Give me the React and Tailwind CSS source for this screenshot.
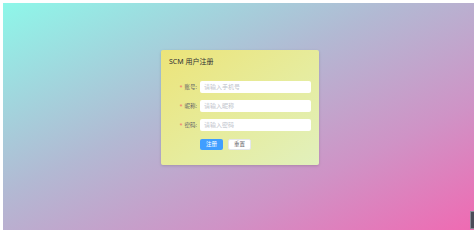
export default function App() {
  const rows = [
    { label: "账号:", placeholder: "请输入手机号", type: "text" },
    { label: "昵称:", placeholder: "请输入昵称", type: "text" },
    { label: "密码:", placeholder: "请输入密码", type: "password" },
  ];

  return (
    <div
      className="relative h-[232px] w-[474px] overflow-hidden bg-white pb-[2px] pl-[3px] pt-[3px]"
      style={{ fontFamily: '"Noto Sans", "Noto Sans CJK SC", sans-serif' }}
    >
      <div className="h-full w-full bg-[linear-gradient(to_bottom_right,#8ef7e9_0%,#b2b9d3_42%,#cf93c6_72%,#f06ab2_100%)] pl-[158px] pt-[47px]">
        <div className="w-[158px] rounded-[2px] bg-[linear-gradient(to_bottom_right,#ece479_0%,#e6ec9e_55%,#e1f0bd_100%)] pb-[15px] pl-[8px] pr-[8px] pt-[7px] shadow-[0_1px_3px_rgba(0,0,0,0.15)]">
          <h1 className="h-[10px] text-[7px] leading-[10px] text-[#303133]">SCM 用户注册</h1>

          <form className="mt-[14px] flex flex-col gap-[7px]">
            {rows.map((row) => (
              <div key={row.label} className="flex h-[12px] items-center">
                <label className="w-[31px] pr-[3px] text-right text-[5.5px] leading-[12px] text-[#606266]">
                  <span className="mr-[2px] text-[#f56c6c]">*</span>
                  {row.label}
                </label>
                <input
                  type={row.type}
                  placeholder={row.placeholder}
                  className="h-[12px] w-[111px] rounded-[2px] bg-white px-[4px] text-[6px] text-[#606266] outline-none placeholder:text-[#c0c4cc]"
                />
              </div>
            ))}

            <div className="ml-[31px] mt-[1px] flex gap-[5px]">
              <button
                type="button"
                className="h-[11px] w-[23px] rounded-[2px] bg-[#409eff] text-[5.5px] leading-[11px] text-white"
              >
                注册
              </button>
              <button
                type="button"
                className="h-[11px] w-[23px] rounded-[2px] border border-[#e4e7ed] bg-white text-[5.5px] leading-[9px] text-[#606266]"
              >
                重置
              </button>
            </div>
          </form>
        </div>
      </div>

      <div className="absolute bottom-[3px] right-0 h-[18px] w-[4px] rounded-l-[1px] border border-r-0 border-[#8a8a96] bg-[#4b4b58]" />
    </div>
  );
}
